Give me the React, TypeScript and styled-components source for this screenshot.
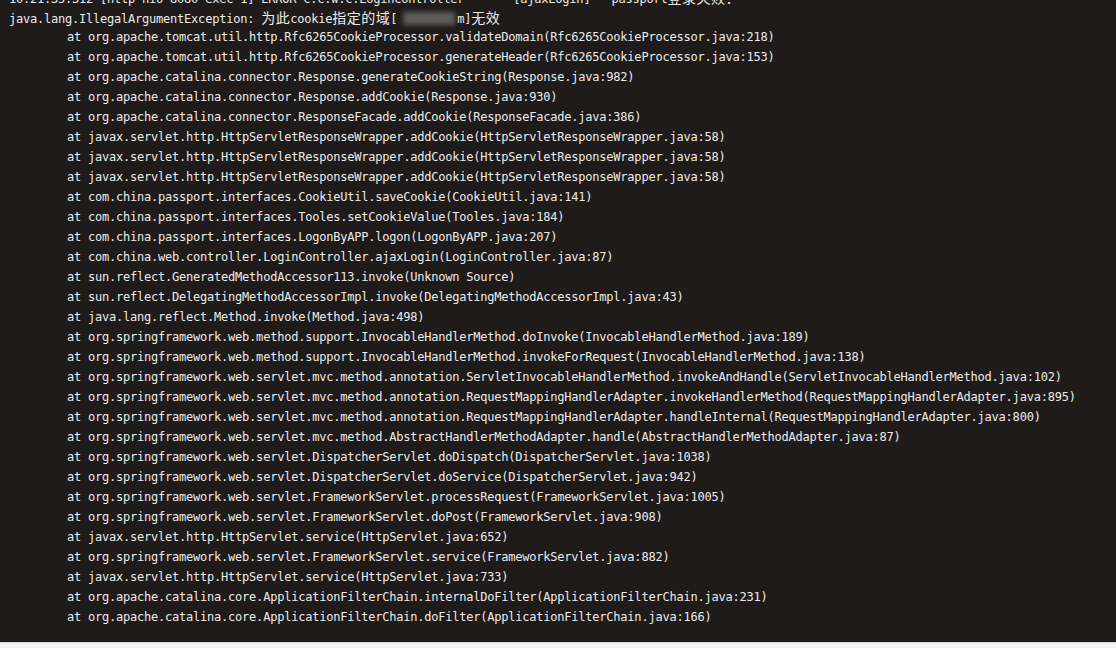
import React from "react";
import styled, { createGlobalStyle } from "styled-components";

const Global = createGlobalStyle`
  html, body { margin: 0; padding: 0; background: #1f1b1a; }
  body { width: 1116px; height: 648px; overflow: hidden; }
`;

const Screen = styled.div`
  width: 1116px;
  height: 648px;
  display: flex;
  flex-direction: column;
  overflow: hidden;
`;

const Terminal = styled.div`
  flex: 1;
  background: #1f1b1a;
  overflow: hidden;
`;

const Output = styled.div`
  margin-top: -13px;
  padding-left: 9px;
  display: flex;
  flex-direction: column;
  font-family: "DejaVu Sans Mono", "Liberation Mono", "Noto Sans CJK SC", monospace;
  font-size: 12px;
  letter-spacing: -0.22px;
  color: #ecebea;
`;

const Line = styled.div<{ $indent?: boolean }>`
  height: 20px;
  line-height: 20px;
  white-space: pre;
  padding-left: ${(p) => (p.$indent ? "58px" : "0")};
`;

const Cjk = styled.span`
  font-family: "Noto Sans CJK SC", sans-serif;
  font-size: 14px;
  letter-spacing: 0.5px;
`;

const Redacted = styled.span`
  display: inline-block;
  width: 52px;
  height: 13px;
  margin: 0 2px 0 6px;
  vertical-align: -2px;
  background: #5e5c5b;
  filter: blur(2.5px);
`;

const StatusStrip = styled.div`
  height: 5px;
  border-top: 1px solid #d6d6d6;
  background: #f4f4f4;
`;

const frames = [
  "org.apache.tomcat.util.http.Rfc6265CookieProcessor.validateDomain(Rfc6265CookieProcessor.java:218)",
  "org.apache.tomcat.util.http.Rfc6265CookieProcessor.generateHeader(Rfc6265CookieProcessor.java:153)",
  "org.apache.catalina.connector.Response.generateCookieString(Response.java:982)",
  "org.apache.catalina.connector.Response.addCookie(Response.java:930)",
  "org.apache.catalina.connector.ResponseFacade.addCookie(ResponseFacade.java:386)",
  "javax.servlet.http.HttpServletResponseWrapper.addCookie(HttpServletResponseWrapper.java:58)",
  "javax.servlet.http.HttpServletResponseWrapper.addCookie(HttpServletResponseWrapper.java:58)",
  "javax.servlet.http.HttpServletResponseWrapper.addCookie(HttpServletResponseWrapper.java:58)",
  "com.china.passport.interfaces.CookieUtil.saveCookie(CookieUtil.java:141)",
  "com.china.passport.interfaces.Tooles.setCookieValue(Tooles.java:184)",
  "com.china.passport.interfaces.LogonByAPP.logon(LogonByAPP.java:207)",
  "com.china.web.controller.LoginController.ajaxLogin(LoginController.java:87)",
  "sun.reflect.GeneratedMethodAccessor113.invoke(Unknown Source)",
  "sun.reflect.DelegatingMethodAccessorImpl.invoke(DelegatingMethodAccessorImpl.java:43)",
  "java.lang.reflect.Method.invoke(Method.java:498)",
  "org.springframework.web.method.support.InvocableHandlerMethod.doInvoke(InvocableHandlerMethod.java:189)",
  "org.springframework.web.method.support.InvocableHandlerMethod.invokeForRequest(InvocableHandlerMethod.java:138)",
  "org.springframework.web.servlet.mvc.method.annotation.ServletInvocableHandlerMethod.invokeAndHandle(ServletInvocableHandlerMethod.java:102)",
  "org.springframework.web.servlet.mvc.method.annotation.RequestMappingHandlerAdapter.invokeHandlerMethod(RequestMappingHandlerAdapter.java:895)",
  "org.springframework.web.servlet.mvc.method.annotation.RequestMappingHandlerAdapter.handleInternal(RequestMappingHandlerAdapter.java:800)",
  "org.springframework.web.servlet.mvc.method.AbstractHandlerMethodAdapter.handle(AbstractHandlerMethodAdapter.java:87)",
  "org.springframework.web.servlet.DispatcherServlet.doDispatch(DispatcherServlet.java:1038)",
  "org.springframework.web.servlet.DispatcherServlet.doService(DispatcherServlet.java:942)",
  "org.springframework.web.servlet.FrameworkServlet.processRequest(FrameworkServlet.java:1005)",
  "org.springframework.web.servlet.FrameworkServlet.doPost(FrameworkServlet.java:908)",
  "javax.servlet.http.HttpServlet.service(HttpServlet.java:652)",
  "org.springframework.web.servlet.FrameworkServlet.service(FrameworkServlet.java:882)",
  "javax.servlet.http.HttpServlet.service(HttpServlet.java:733)",
  "org.apache.catalina.core.ApplicationFilterChain.internalDoFilter(ApplicationFilterChain.java:231)",
  "org.apache.catalina.core.ApplicationFilterChain.doFilter(ApplicationFilterChain.java:166)",
];

export default function App() {
  return (
    <Screen>
      <Global />
      <Terminal>
        <Output>
          <Line>
            {"10:21:35.312 [http-nio-8080-exec-1] ERROR c.c.w.c.LoginController     - [ajaxLogin] - passport"}
            <Cjk>登录失败：</Cjk>
          </Line>
          <Line>
            {"java.lang.IllegalArgumentException: "}
            <Cjk>为此</Cjk>
            {"cookie"}
            <Cjk>指定的域</Cjk>
            {"["}
            <Redacted />
            {"m]"}
            <Cjk>无效</Cjk>
          </Line>
          {frames.map((f, i) => (
            <Line key={i} $indent>
              {"at " + f}
            </Line>
          ))}
        </Output>
      </Terminal>
      <StatusStrip />
    </Screen>
  );
}
